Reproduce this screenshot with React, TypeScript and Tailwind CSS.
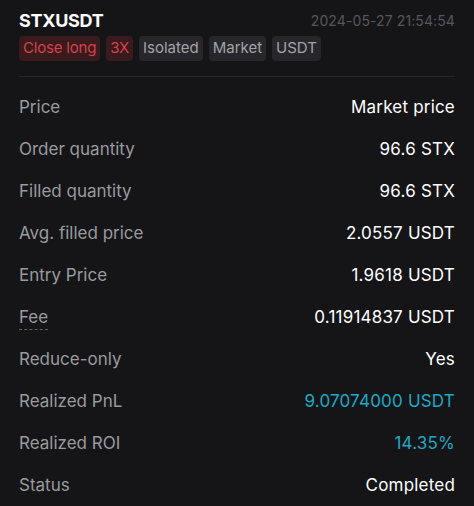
const tags = [
  { label: "Close long", red: true },
  { label: "3X", red: true },
  { label: "Isolated" },
  { label: "Market" },
  { label: "USDT" },
];

const rows: { label: string; value: string; tone?: "cyan"; dashed?: boolean }[] = [
  { label: "Price", value: "Market price" },
  { label: "Order quantity", value: "96.6 STX" },
  { label: "Filled quantity", value: "96.6 STX" },
  { label: "Avg. filled price", value: "2.0557 USDT" },
  { label: "Entry Price", value: "1.9618 USDT" },
  { label: "Fee", value: "0.11914837 USDT", dashed: true },
  { label: "Reduce-only", value: "Yes" },
  { label: "Realized PnL", value: "9.07074000 USDT", tone: "cyan" },
  { label: "Realized ROI", value: "14.35%", tone: "cyan" },
  { label: "Status", value: "Completed" },
];

export default function App() {
  return (
    <main className="h-[506px] w-[474px] overflow-hidden bg-[#151518] px-[19px] pt-[9px] font-['Inter',sans-serif]">
      <header className="flex h-[22px] items-center justify-between">
        <h1 className="text-[18px] font-bold tracking-[-0.3px] text-white">STXUSDT</h1>
        <time className="text-[14px] tracking-[0.1px] text-[#56565b]">2024-05-27 21:54:54</time>
      </header>

      <div className="mt-[5px] flex gap-[6px]">
        {tags.map((t) => (
          <span
            key={t.label}
            className={
              t.red
                ? "flex h-[25px] items-center rounded-[4px] bg-[#391a1d] px-[4px] text-[15px] tracking-[-0.2px] text-[#d6424a]"
                : "flex h-[25px] items-center rounded-[4px] bg-[#26262b] px-[4px] text-[15px] text-[#a3a3a8]"
            }
          >
            {t.label}
          </span>
        ))}
      </div>

      <div className="mt-[15px] h-px bg-[#27272b]" />

      <section className="mt-[10px]">
        {rows.map((r) => (
          <div key={r.label} className="flex h-[42px] items-center justify-between text-[17px]">
            <span
              className={
                r.dashed
                  ? "text-[#9a9a9f] underline decoration-dashed decoration-1 decoration-[#5e5e63] underline-offset-[6px]"
                  : "text-[#9a9a9f]"
              }
            >
              {r.label}
            </span>
            <span className={r.tone === "cyan" ? "tracking-[0.2px] text-[#1fa8c4]" : "tracking-[0.2px] text-white"}>
              {r.value}
            </span>
          </div>
        ))}
      </section>
    </main>
  );
}
